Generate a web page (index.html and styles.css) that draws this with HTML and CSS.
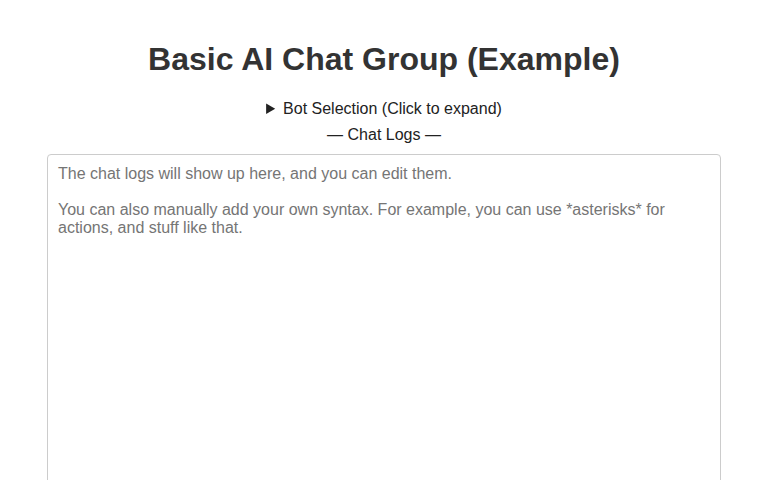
FILE: index.html
```html
<!DOCTYPE html>
<html>
<head>
<meta charset="utf-8">
<link rel="stylesheet" href="styles.css">
</head>
<body>
<main class="page">
  <h1 class="title">Basic AI Chat Group (Example)</h1>
  <details class="bots">
    <summary>Bot Selection (Click to expand)</summary>
  </details>
  <div class="logs-label">— Chat Logs —</div>
  <textarea class="logs" placeholder="The chat logs will show up here, and you can edit them.

You can also manually add your own syntax. For example, you can use *asterisks* for actions, and stuff like that."></textarea>
</main>
</body>
</html>
```
FILE: styles.css
```css
html, body {
  margin: 0;
  padding: 0;
  background: #fff;
}
body {
  font-family: "Liberation Sans", Arial, sans-serif;
  color: #222;
  font-size: 16px;
}
.page {
  padding: 41px 8px 0;
  display: flex;
  flex-direction: column;
  align-items: center;
}
.title {
  margin: 0 0 22px;
  font-size: 32px;
  line-height: 37px;
  font-weight: bold;
  color: #333;
  text-align: center;
}
.bots {
  text-align: center;
}
.bots summary {
  cursor: pointer;
  line-height: 18px;
  color: #222;
}
.logs-label {
  margin-top: 8px;
  line-height: 18px;
  color: #222;
}
.logs {
  margin-top: 10px;
  box-sizing: border-box;
  width: 674px;
  height: 400px;
  padding: 10px;
  border: 1px solid #ccc;
  border-radius: 4px;
  font-family: "Liberation Sans", Arial, sans-serif;
  font-size: 16px;
  line-height: 18px;
  resize: vertical;
}
.logs::placeholder {
  color: #757575;
}
```
